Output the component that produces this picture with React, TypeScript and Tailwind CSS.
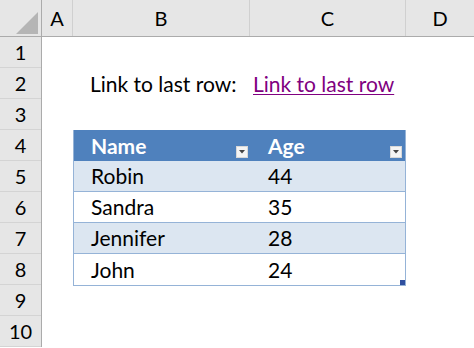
import React from 'react';

const colHeaders = [
  { label: 'A', w: 'w-[31px]' },
  { label: 'B', w: 'w-[177px]' },
  { label: 'C', w: 'w-[156px]' },
  { label: 'D', w: 'flex-1' },
];

const people = [
  { name: 'Robin', age: 44 },
  { name: 'Sandra', age: 35 },
  { name: 'Jennifer', age: 28 },
  { name: 'John', age: 24 },
];

const FilterButton: React.FC = () => (
  <div className="absolute right-[3px] bottom-[3px] h-[12px] w-[12px] bg-[#f4f4f4] border border-[#d8d8d8] flex items-center justify-center">
    <svg width="6" height="4" viewBox="0 0 6 4">
      <path d="M0 0 L6 0 L3 3.5 Z" fill="#444" />
    </svg>
  </div>
);

export default function App() {
  return (
    <div className="w-[474px] h-[348px] bg-white overflow-hidden text-black" style={{ fontFamily: 'Lato, "Open Sans", sans-serif' }}>
      {/* column headers */}
      <div className="flex h-[37px] bg-[#e6e6e6] border-b border-[#ababab]">
        <div className="w-[42px] h-full border-r border-[#ababab] relative">
          <svg className="absolute left-0 top-0" width="42" height="36" viewBox="0 0 42 36">
            <path d="M16 34 L38 34 L38 12 Z" fill="#b5b5b5" />
          </svg>
        </div>
        {colHeaders.map((c) => (
          <div
            key={c.label}
            className={`${c.w} h-full flex items-center justify-center text-[20px] border-r border-[#d0d0d0] last:border-r-0`}
          >
            {c.label}
          </div>
        ))}
      </div>

      <div className="flex">
        {/* row headers */}
        <div className="w-[42px] bg-[#e6e6e6] border-r border-[#ababab]">
          {Array.from({ length: 10 }, (_, i) => (
            <div key={i} className="h-[31px] flex items-center justify-center text-[20px] border-b border-[#d4d4d4]">
              {i + 1}
            </div>
          ))}
        </div>

        {/* cells */}
        <div className="flex-1 text-[21px]">
          <div className="h-[31px]" />
          <div className="h-[31px] flex items-center">
            <div className="w-[208px] pl-[48px]">Link to last row:</div>
            <a className="text-[#800080] underline underline-offset-2 decoration-1 pl-[3px]" href="#">
              Link to last row
            </a>
          </div>
          <div className="h-[31px]" />

          <div className="ml-[31px] w-[333px] border-x border-b border-[#95b3d7] relative">
            <div className="flex h-[31px] bg-[#4f81bd] text-white font-bold">
              <div className="w-[177px] relative flex items-center pl-[17px]">
                Name
                <FilterButton />
              </div>
              <div className="flex-1 relative flex items-center pl-[17px]">
                Age
                <FilterButton />
              </div>
            </div>
            {people.map((p, i) => (
              <div
                key={p.name}
                className={`flex h-[31px] ${i % 2 === 0 ? 'bg-[#dce6f1]' : 'bg-white'} ${i < people.length - 1 ? 'border-b border-[#95b3d7]' : ''}`}
              >
                <div className="w-[177px] flex items-center pl-[17px]">{p.name}</div>
                <div className="flex-1 flex items-center pl-[17px]">{p.age}</div>
              </div>
            ))}
            <div className="absolute right-0 bottom-0 w-[5px] h-[5px] bg-[#2f4f9f]" />
          </div>
        </div>
      </div>
    </div>
  );
}
